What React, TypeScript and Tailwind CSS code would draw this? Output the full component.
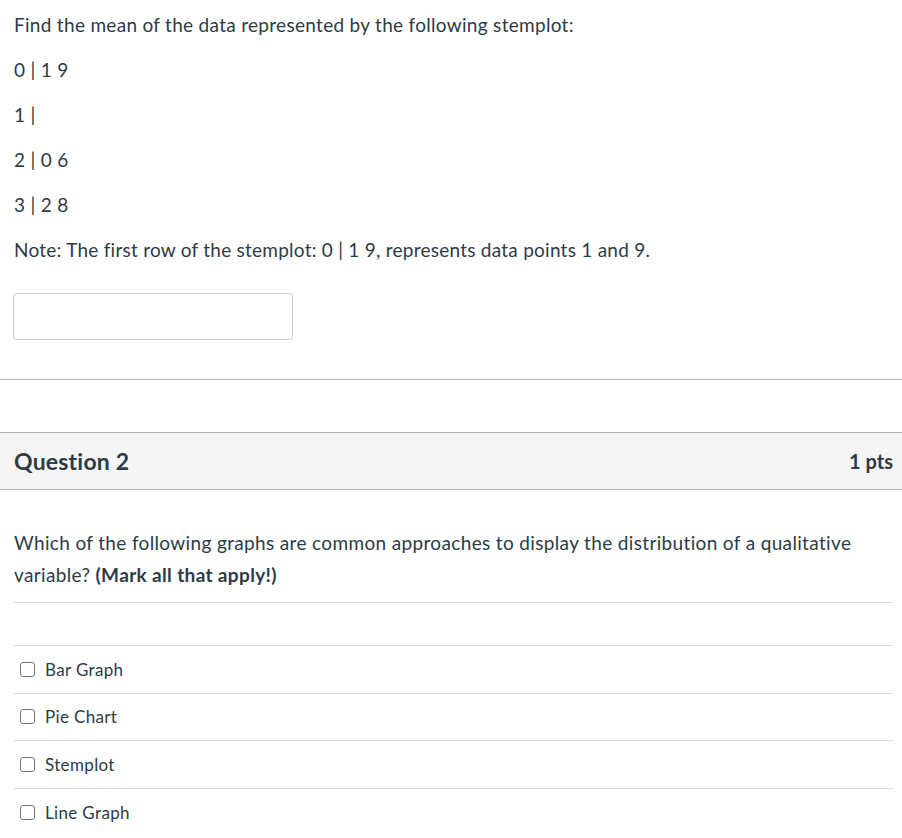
const answers = ['Bar Graph', 'Pie Chart', 'Stemplot', 'Line Graph']

const stems = ['0 | 1 9', '1 |', '2 | 0 6', '3 | 2 8']

export default function App() {
  return (
    <div className="min-h-[838px] bg-white text-[#2d3b45] font-['Lato',sans-serif]">
      {/* question 1 body */}
      <div className="px-[14px] pt-[11px] text-[19px] leading-[27px] tracking-[0.3px]">
        <p className="mb-[18px]">Find the mean of the data represented by the following stemplot:</p>
        {stems.map((s) => (
          <p key={s} className="mb-[18px]">{s}</p>
        ))}
        <p className="tracking-[0.25px]">Note: The first row of the stemplot: 0 | 1 9, represents data points 1 and 9.</p>
        <div className="pt-[30px] pb-[39px]">
          <input
            type="text"
            className="block w-[280px] h-[47px] -ml-px rounded-[4px] border border-[#c7cdd1] bg-white px-3 outline-none"
          />
        </div>
      </div>
      <div className="h-px bg-[#b4b4b4]" />

      {/* question 2 */}
      <div className="mt-[52px] flex h-[58px] items-center justify-between border-y border-[#b4b4b4] bg-[#f5f5f5] pl-[14px] pr-[9px]">
        <h2 className="text-[23px] font-bold tracking-[0.2px]">Question 2</h2>
        <span className="text-[20px] font-bold">1 pts</span>
      </div>

      <div className="pl-[13px] pr-[9px]">
        <p className="pl-px pt-[37px] pb-[11px] text-[19px] leading-[32px] tracking-[0.35px]">
          Which of the following graphs are common approaches to display the distribution of a qualitative
          variable? <strong className="font-bold">(Mark all that apply!)</strong>
        </p>
        <div className="h-[43px] border-t border-[#dcdcdc]" />
        <div className="border-t border-[#dcdcdc]">
          {answers.map((a, i) => (
            <label
              key={a}
              className={`flex h-[47.5px] items-center gap-[10px] pl-[7px] text-[17px] tracking-[0.35px] ${
                i < answers.length - 1 ? 'border-b border-[#dcdcdc]' : ''
              }`}
            >
              <span className="block h-[15px] w-[15px] rounded-[3px] border border-[#767676] bg-white" />
              {a}
            </label>
          ))}
        </div>
      </div>
    </div>
  )
}
